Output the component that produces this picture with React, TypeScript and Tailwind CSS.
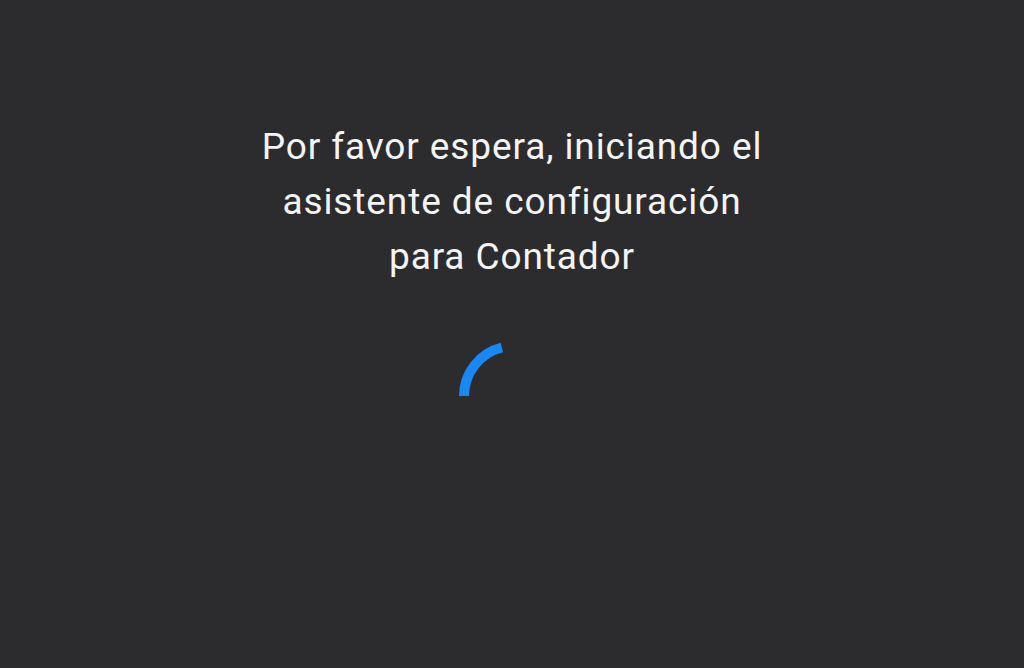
import React from "react";

function Spinner() {
  // partial arc of the loading ring, drawn from the left point up and to the right
  const r = 50;
  const cx = 62;
  const cy = 66;
  const a0 = Math.PI;
  const a1 = (256 * Math.PI) / 180;
  const x0 = cx + r * Math.cos(a0);
  const y0 = cy + r * Math.sin(a0);
  const x1 = cx + r * Math.cos(a1);
  const y1 = cy + r * Math.sin(a1);
  return (
    <svg width="120" height="120" viewBox="0 0 120 120" className="block">
      <path
        d={`M ${x0} ${y0} A ${r} ${r} 0 0 1 ${x1} ${y1}`}
        fill="none"
        stroke="#1a88f4"
        strokeWidth="10"
      />
    </svg>
  );
}

export default function App() {
  return (
    <div className="min-h-screen h-[668px] bg-[#2c2c2e] flex flex-col items-center pt-[119px] font-['Roboto',sans-serif]">
      <p className="text-[37px] leading-[55px] text-[#f4f4f4] text-center tracking-[0.9px]">
        Por favor espera, iniciando el
        <br />
        asistente de configuración
        <br />
        para Contador
      </p>
      <div className="mt-[46px]">
        <Spinner />
      </div>
    </div>
  );
}
